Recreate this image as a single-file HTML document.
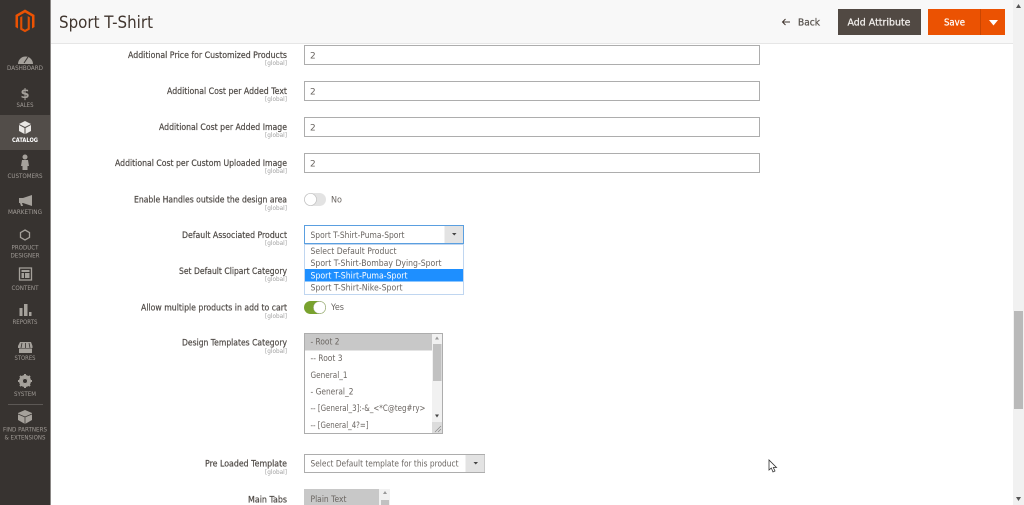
<!DOCTYPE html>
<html><head><meta charset="utf-8"><title>Sport T-Shirt</title>
<style>
html,body{margin:0;padding:0;width:1024px;height:505px;overflow:hidden;background:#fff}
svg{display:block;font-family:"DejaVu Sans","Liberation Sans",sans-serif}
.l{font-size:9px;fill:#4f4a46;text-anchor:end;stroke:#4f4a46;stroke-width:.22px}
.g{font-size:6px;fill:#a0a0a0;text-anchor:end}
.t{font-size:9px;fill:#6a6561}
.n{font-size:6px;fill:#a09b96;text-anchor:middle}
.i{fill:#a5a19b}
</style></head><body>
<svg width="1024" height="505" viewBox="0 0 1024 505" xmlns="http://www.w3.org/2000/svg">
<rect width="1024" height="505" fill="#fff"/>
<!-- sidebar -->
<rect width="50" height="505" fill="#373330"/>
<rect x="50" width="1" height="505" fill="#8a8785"/>
<rect y="115" width="50" height="35" fill="#524d49"/>
<path fill="#eb5202" d="M25 9.500 34.500 15V27L32 28.500V16.500L25 12.500 18 16.500V28.500L15.500 27V15Z"/>
<path fill="#eb5202" d="M25 14.500 29.800 17.300V29.500L25 32.300 20.200 29.500V17.300L22.300 16.100V28.300L25 29.800 27.700 28.300V16.100Z" opacity=".95"/>
<path class="i" d="M18 64a7.500 7.500 0 0 1 15 0Z"/><path d="M24 63 28 57" stroke="#373330" stroke-width="1"/>
<text class="n" x="25" y="70" textLength="36" lengthAdjust="spacingAndGlyphs">DASHBOARD</text>
<text x="25" y="98" font-size="13" font-weight="bold" fill="#a5a19b" text-anchor="middle">$</text>
<text class="n" x="25" y="107" textLength="17" lengthAdjust="spacingAndGlyphs">SALES</text>
<path fill="#e9e7e4" d="M25 121 31 124 25 127 19 124Z"/><path fill="#e9e7e4" d="M19 125 24.500 128V134L19 131ZM31 125 25.500 128V134L31 131Z"/>
<text x="25" y="142" font-size="6" font-weight="bold" fill="#fff" text-anchor="middle" textLength="26" lengthAdjust="spacingAndGlyphs">CATALOG</text>
<circle class="i" cx="25" cy="157" r="2.500"/><path class="i" d="M22 160H28L29 166H27.500V170H22.500V166H21Z"/>
<text class="n" x="25" y="178" textLength="35" lengthAdjust="spacingAndGlyphs">CUSTOMERS</text>
<path class="i" d="M19 198H23L32 195V206L23 203H22L23 206H21L20 203H19Z"/>
<text class="n" x="25" y="214" textLength="34" lengthAdjust="spacingAndGlyphs">MARKETING</text>
<path fill="none" stroke="#a5a19b" stroke-width="1.300" d="M25 230 29.500 232.600V237.400L25 240 20.500 237.400V232.600Z"/>
<text class="n" x="25" y="249.500" textLength="27" lengthAdjust="spacingAndGlyphs">PRODUCT</text>
<text class="n" x="25" y="257.500" textLength="29" lengthAdjust="spacingAndGlyphs">DESIGNER</text>
<path fill="none" stroke="#a5a19b" stroke-width="1.300" d="M19.500 268H31.500V280H19.500Z"/><rect class="i" x="21.500" y="270" width="8" height="2"/><rect class="i" x="21.500" y="273" width="2.500" height="5"/><rect class="i" x="25" y="273" width="4.500" height="5"/>
<text class="n" x="25" y="290" textLength="27" lengthAdjust="spacingAndGlyphs">CONTENT</text>
<rect class="i" x="19.500" y="308" width="3" height="8"/><rect class="i" x="24" y="304" width="3.500" height="12"/><rect class="i" x="29" y="312" width="2.500" height="4"/>
<text class="n" x="25" y="324" textLength="25" lengthAdjust="spacingAndGlyphs">REPORTS</text>
<path class="i" d="M20 342H31L32.500 346V348H18V346Z"/><path class="i" d="M19 348.500H32V353H19Z"/><path d="M22 343 21 348M25.500 343V348M29 343 30 348" stroke="#373330" stroke-width=".8"/>
<text class="n" x="25" y="360" textLength="21" lengthAdjust="spacingAndGlyphs">STORES</text>
<circle cx="25" cy="381" r="4.500" fill="none" stroke="#a5a19b" stroke-width="3"/><path d="M25 374V388M18 381H32M20 376 30 386M30 376 20 386" stroke="#a5a19b" stroke-width="2"/><circle cx="25" cy="381" r="2" fill="#373330"/>
<text class="n" x="25" y="396" textLength="22" lengthAdjust="spacingAndGlyphs">SYSTEM</text>
<rect x="8" y="404" width="35" height="1" fill="#5c5855"/>
<path class="i" d="M25 410 32 413V420L25 424 18 420V413Z"/><path d="M18 414 25 417 32 414M25 417V424" stroke="#373330" stroke-width=".7" fill="none"/>
<text class="n" x="25" y="431.500" textLength="44" lengthAdjust="spacingAndGlyphs">FIND PARTNERS</text>
<text class="n" x="25" y="439.500" textLength="41" lengthAdjust="spacingAndGlyphs">&amp; EXTENSIONS</text>
<!-- header -->
<rect x="51" width="962" height="43" fill="#f8f8f8"/>
<rect x="51" y="43" width="962" height="1" fill="#e6e6e6"/>
<text x="59" y="28" font-size="17" fill="#41362f" textLength="94" lengthAdjust="spacingAndGlyphs">Sport T-Shirt</text>
<path d="M790 22H782.500M785.500 19 782.500 22 785.500 25" fill="none" stroke="#41362f" stroke-width="1"/>
<text x="798" y="25.500" font-size="9.500" fill="#5a5550" stroke="#5a5550" stroke-width=".25" textLength="22" lengthAdjust="spacingAndGlyphs">Back</text>
<rect x="838" y="9" width="83" height="26" fill="#514943"/>
<text x="847.500" y="25.500" font-size="9.500" fill="#f2efec" stroke="#f2efec" stroke-width=".25" textLength="63" lengthAdjust="spacingAndGlyphs">Add Attribute</text>
<rect x="928" y="9" width="77" height="26" fill="#eb5202"/>
<rect x="980" y="9" width="1" height="26" fill="#c94602"/>
<text x="944" y="25.500" font-size="9.500" fill="#fff" stroke="#fff" stroke-width=".25" textLength="21" lengthAdjust="spacingAndGlyphs">Save</text>
<path d="M989 20H998L993.500 25.500Z" fill="#fff"/>
<!-- page scrollbar -->
<rect x="1013" width="11" height="505" fill="#f1f1f1"/>
<rect x="1014" y="311" width="9" height="98" fill="#b9b9b9"/>
<path d="M1018.500 4 1016 8H1021Z" fill="#555"/><path d="M1016 497H1021L1018.500 501Z" fill="#555"/>
<!-- rows -->
<g>
<text class="l" x="287" y="58" textLength="159" lengthAdjust="spacingAndGlyphs">Additional Price for Customized Products</text><text class="g" x="287" y="65" textLength="22" lengthAdjust="spacingAndGlyphs">[global]</text>
<rect x="304.500" y="45.500" width="455" height="19" fill="#fff" stroke="#adadad"/><text class="t" x="310" y="58.500">2</text>
<text class="l" x="287" y="94" textLength="120" lengthAdjust="spacingAndGlyphs">Additional Cost per Added Text</text><text class="g" x="287" y="101" textLength="22" lengthAdjust="spacingAndGlyphs">[global]</text>
<rect x="304.500" y="81.500" width="455" height="19" fill="#fff" stroke="#adadad"/><text class="t" x="310" y="94.500">2</text>
<text class="l" x="287" y="130" textLength="128" lengthAdjust="spacingAndGlyphs">Additional Cost per Added Image</text><text class="g" x="287" y="137" textLength="22" lengthAdjust="spacingAndGlyphs">[global]</text>
<rect x="304.500" y="117.500" width="455" height="19" fill="#fff" stroke="#adadad"/><text class="t" x="310" y="130.500">2</text>
<text class="l" x="287" y="166" textLength="172" lengthAdjust="spacingAndGlyphs">Additional Cost per Custom Uploaded Image</text><text class="g" x="287" y="173" textLength="22" lengthAdjust="spacingAndGlyphs">[global]</text>
<rect x="304.500" y="153.500" width="455" height="19" fill="#fff" stroke="#adadad"/><text class="t" x="310" y="166.500">2</text>
<text class="l" x="287" y="202.500" textLength="153" lengthAdjust="spacingAndGlyphs">Enable Handles outside the design area</text><text class="g" x="287" y="210" textLength="22" lengthAdjust="spacingAndGlyphs">[global]</text>
<rect x="304" y="193" width="22" height="13" rx="6.500" fill="#e3e3e3"/><circle cx="310.500" cy="199.500" r="6" fill="#fff" stroke="#bbb" stroke-width=".6"/>
<text class="t" x="331" y="202.500" textLength="11" lengthAdjust="spacingAndGlyphs">No</text>
<text class="l" x="287" y="238" textLength="105" lengthAdjust="spacingAndGlyphs">Default Associated Product</text><text class="g" x="287" y="245" textLength="22" lengthAdjust="spacingAndGlyphs">[global]</text>
<text class="l" x="287" y="274" textLength="108" lengthAdjust="spacingAndGlyphs">Set Default Clipart Category</text><text class="g" x="287" y="281" textLength="22" lengthAdjust="spacingAndGlyphs">[global]</text>
<rect x="304.500" y="225.500" width="159" height="18" fill="#fff" stroke="#5a9fe0"/>
<rect x="444.500" y="226" width="18.500" height="17" fill="#e3e3e3"/>
<path d="M452 233H456.500L454.250 235.500Z" fill="#444"/>
<text class="t" x="310.500" y="238" textLength="94" lengthAdjust="spacingAndGlyphs">Sport T-Shirt-Puma-Sport</text>
<rect x="304.500" y="244.500" width="159" height="50" fill="#fff" stroke="#c0d6f0"/>
<rect x="305" y="269" width="158" height="12.500" fill="#1e8fff"/>
<text class="t" x="310.500" y="254" textLength="86" lengthAdjust="spacingAndGlyphs">Select Default Product</text>
<text class="t" x="310.500" y="266" textLength="131" lengthAdjust="spacingAndGlyphs">Sport T-Shirt-Bombay Dying-Sport</text>
<text x="310.500" y="278.500" font-size="9" fill="#fff" textLength="97" lengthAdjust="spacingAndGlyphs">Sport T-Shirt-Puma-Sport</text>
<text class="t" x="310.500" y="290.500" textLength="92" lengthAdjust="spacingAndGlyphs">Sport T-Shirt-Nike-Sport</text>
<text class="l" x="287" y="310.500" textLength="146" lengthAdjust="spacingAndGlyphs">Allow multiple products in add to cart</text><text class="g" x="287" y="318" textLength="22" lengthAdjust="spacingAndGlyphs">[global]</text>
<rect x="304" y="301" width="22" height="13" rx="6.500" fill="#79a22e"/><circle cx="319.500" cy="307.500" r="6" fill="#fff" stroke="#bbb" stroke-width=".5"/>
<text class="t" x="331" y="310" textLength="13" lengthAdjust="spacingAndGlyphs">Yes</text>
<text class="l" x="287" y="345.500" textLength="105" lengthAdjust="spacingAndGlyphs">Design Templates Category</text><text class="g" x="287" y="353" textLength="22" lengthAdjust="spacingAndGlyphs">[global]</text>
<rect x="304.500" y="333.500" width="138" height="100" fill="#fff" stroke="#adadad"/>
<rect x="305" y="334" width="127" height="16.500" fill="#c8c8c8"/>
<rect x="432" y="334" width="10" height="99" fill="#f1f1f1"/>
<rect x="433" y="344" width="8.500" height="37" fill="#c1c1c1"/>
<path d="M437 336.500 435 339.500H439Z" fill="#999"/><path d="M435 414.500H439L437 417.500Z" fill="#444"/>
<rect x="432" y="422" width="10" height="11" fill="#dcdcdc"/><path d="M435 432 441 426M438 432 441 429" stroke="#888" stroke-width=".7"/>
<text class="t" x="310.500" y="344.500" textLength="29" lengthAdjust="spacingAndGlyphs">- Root 2</text>
<text class="t" x="310.500" y="361" textLength="32" lengthAdjust="spacingAndGlyphs">-- Root 3</text>
<text class="t" x="310.500" y="378" textLength="37" lengthAdjust="spacingAndGlyphs">General_1</text>
<text class="t" x="310.500" y="394.500" textLength="43" lengthAdjust="spacingAndGlyphs">- General_2</text>
<text class="t" x="310.500" y="411" textLength="115" lengthAdjust="spacingAndGlyphs">-- [General_3]:-&amp;_&lt;*C@teg#ry&gt;</text>
<text class="t" x="310.500" y="428" textLength="58" lengthAdjust="spacingAndGlyphs">-- [General_4?=]</text>
<text class="l" x="287" y="466.500" textLength="82" lengthAdjust="spacingAndGlyphs">Pre Loaded Template</text><text class="g" x="287" y="474" textLength="22" lengthAdjust="spacingAndGlyphs">[global]</text>
<rect x="304.500" y="454.500" width="180" height="18" fill="#fff" stroke="#adadad"/>
<rect x="465.500" y="455" width="19" height="17" fill="#e3e3e3"/>
<path d="M473.500 462H478L475.750 464.500Z" fill="#444"/>
<text class="t" x="310.500" y="466.500" textLength="148" lengthAdjust="spacingAndGlyphs">Select Default template for this product</text>
<text class="l" x="287" y="502.500" textLength="39" lengthAdjust="spacingAndGlyphs">Main Tabs</text>
<rect x="304" y="489" width="86" height="17" fill="#f1f1f1"/>
<rect x="304" y="489" width="75" height="17" fill="#c8c8c8"/>
<path d="M385 491 383 494H387Z" fill="#999"/><rect x="381" y="500" width="8" height="5" fill="#c1c1c1"/>
<text class="t" x="310.500" y="502" textLength="36" lengthAdjust="spacingAndGlyphs">Plain Text</text>
</g>
<!-- cursor -->
<path d="M769 460V470L771.300 468 773 472 775 471 773.300 467.500H776.500Z" fill="#fff" stroke="#333" stroke-width=".8"/>
</svg>
</body></html>
